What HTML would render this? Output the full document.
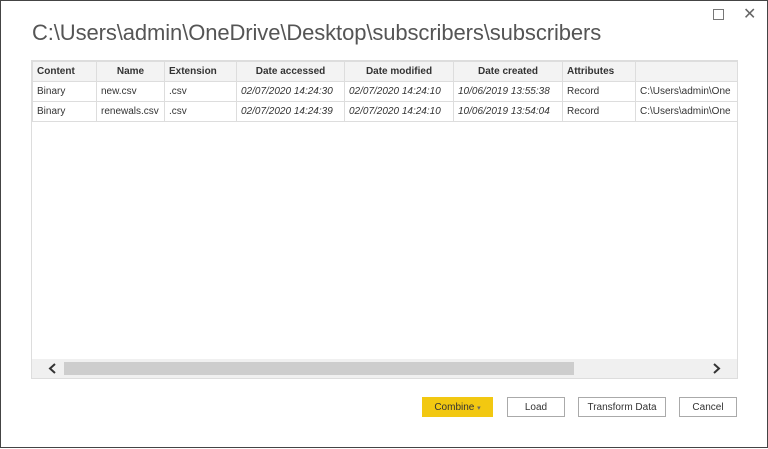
<!DOCTYPE html>
<html><head><style>
body{margin:0;width:768px;height:449px;overflow:hidden;background:#fff;font-family:"Liberation Sans",sans-serif;}
.frame{position:absolute;left:0;top:0;width:766px;height:446px;border:1px solid #444;}
.title{position:absolute;left:32px;top:20px;font-size:22px;color:#555;letter-spacing:-0.1px;}
.ctl{position:absolute;top:6px;font-size:14px;color:#666;}
.grid{position:absolute;left:31px;top:60px;width:705px;height:317px;border:1px solid #ddd;overflow:hidden;}
table{border-collapse:collapse;table-layout:fixed;width:706px;font-size:10px;color:#333;position:absolute;left:0;top:0;}
td,th{border:1px solid #ddd;height:19px;padding:0 4px;white-space:nowrap;overflow:hidden;}
th{background:#f3f3f3;font-weight:bold;text-align:center;}
th:first-child{text-align:left}
td i{font-style:italic}
.sb{position:absolute;left:0;top:298px;width:705px;height:19px;background:#f0f0f0;}
.thumb{position:absolute;left:32px;top:3px;width:510px;height:13px;background:#cdcdcd;}
.btn{position:absolute;top:397px;height:20px;border:1px solid #aaa;font-size:10px;color:#333;text-align:center;line-height:20px;box-sizing:border-box;}
</style></head><body>
<div class="frame"></div>
<div class="title">C:\Users\admin\OneDrive\Desktop\subscribers\subscribers</div>
<div class="ctl" style="left:713px;top:6px"><div style="width:9px;height:9px;border:1px solid #777;margin-top:3px"></div></div>
<div class="ctl" style="left:743px;top:4px;font-size:16px">✕</div>
<div class="grid">
<table>
<colgroup><col style="width:64px"><col style="width:68px"><col style="width:72px"><col style="width:108px"><col style="width:109px"><col style="width:109px"><col style="width:73px"><col style="width:103px"></colgroup>
<tr><th>Content</th><th>Name</th><th style="text-align:left">Extension</th><th>Date accessed</th><th>Date modified</th><th>Date created</th><th style="text-align:left">Attributes</th><th></th></tr>
<tr><td>Binary</td><td>new.csv</td><td>.csv</td><td><i>02/07/2020 14:24:30</i></td><td><i>02/07/2020 14:24:10</i></td><td><i>10/06/2019 13:55:38</i></td><td>Record</td><td>C:\Users\admin\One</td></tr>
<tr><td>Binary</td><td>renewals.csv</td><td>.csv</td><td><i>02/07/2020 14:24:39</i></td><td><i>02/07/2020 14:24:10</i></td><td><i>10/06/2019 13:54:04</i></td><td>Record</td><td>C:\Users\admin\One</td></tr>
</table>
<div class="sb"><div class="thumb"></div>
<svg style="position:absolute;left:16px;top:4px" width="10" height="11"><path d="M7 1L2 5.5 7 10" stroke="#333" stroke-width="2" fill="none"/></svg>
<svg style="position:absolute;left:679px;top:4px" width="10" height="11"><path d="M3 1L8 5.5 3 10" stroke="#333" stroke-width="2" fill="none"/></svg>
</div>
</div>
<div class="btn" style="left:422px;width:71px;background:#f2c811;border-color:#f2c811">Combine <span style="font-size:7px;color:#666">▾</span></div>
<div class="btn" style="left:507px;width:58px">Load</div>
<div class="btn" style="left:578px;width:88px">Transform Data</div>
<div class="btn" style="left:679px;width:58px">Cancel</div>
</body></html>
